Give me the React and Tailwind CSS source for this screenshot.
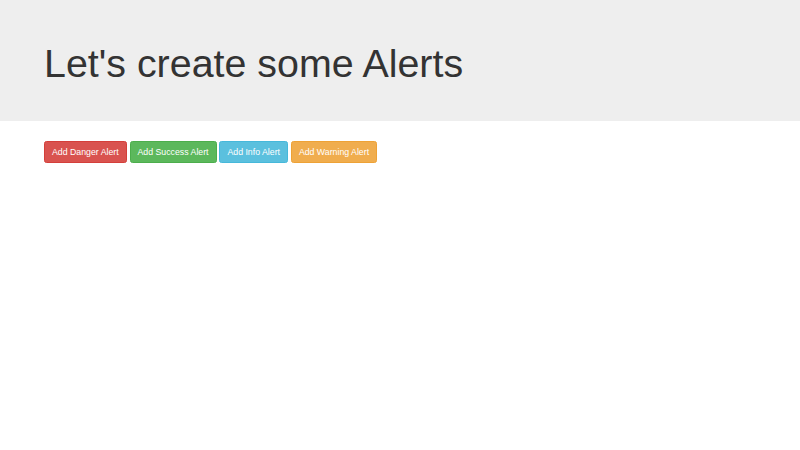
export default function App() {
    const buttons = [
        { label: "Add Danger Alert", cls: "bg-[#d9534f] border-[#d43f3a]" },
        { label: "Add Success Alert", cls: "bg-[#5cb85c] border-[#4cae4c]" },
        { label: "Add Info Alert", cls: "bg-[#5bc0de] border-[#46b8da]" },
        { label: "Add Warning Alert", cls: "bg-[#f0ad4e] border-[#eea236]" },
    ];

    return (
        <div className="min-h-[450px] bg-white text-[#333] font-['Liberation_Sans',Arial,sans-serif]">
            {/* Jumbotron */}
            <div className="bg-[#eeeeee] px-[44px] pt-[42px] pb-[36px]">
                <h1 className="text-[39.4px] leading-[43px] font-normal">Let's create some Alerts</h1>
            </div>

            {/* Buttons */}
            <div className="flex gap-[2.9px] px-[44px] mt-[20px]">
                {buttons.map((b) => (
                    <button
                        key={b.label}
                        className={`${b.cls} border border-solid text-white text-[8.75px] leading-[13px] px-[7px] py-[3.5px] rounded-[2.5px]`}
                    >
                        {b.label}
                    </button>
                ))}
            </div>
        </div>
    );
}
